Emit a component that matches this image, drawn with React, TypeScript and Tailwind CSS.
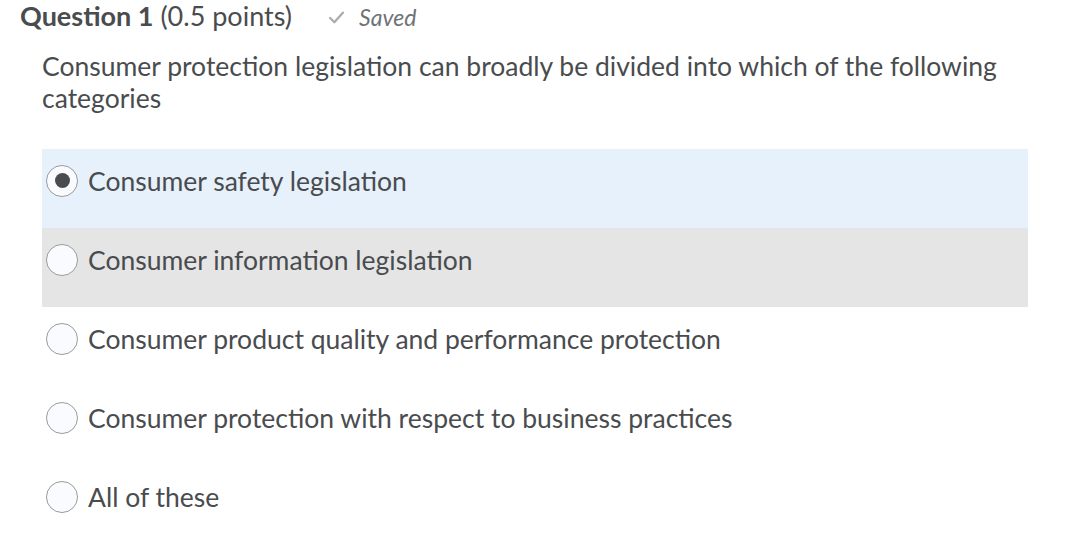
import React, { useState } from "react";

const options = [
  "Consumer safety legislation",
  "Consumer information legislation",
  "Consumer product quality and performance protection",
  "Consumer protection with respect to business practices",
  "All of these",
];

function App() {
  const [selected, setSelected] = useState(0);
  const [hovered] = useState(1);

  return (
    <div className="min-h-screen bg-white text-[#494c4e] font-['Lato','Liberation_Sans',sans-serif]">
      <div className="flex items-baseline pl-[20px]">
        <h2 className="text-[27px] leading-[32px]">
          <span className="font-bold">Question 1</span> (0.5 points)
        </h2>
        <div className="ml-[36px] flex items-baseline gap-[14px] text-[#6e7376]">
          <svg width="17" height="15" viewBox="0 0 16 14" className="self-center">
            <path d="M2 7.5 L6 11.5 L14 2.5" fill="none" stroke="#a9adb0" strokeWidth="2.2" strokeLinecap="round" strokeLinejoin="round" />
          </svg>
          <span className="text-[23px] italic">Saved</span>
        </div>
      </div>

      <div className="pl-[42px] pr-[50px]">
        <p className="mt-[15px] text-[26.5px] leading-[32px] w-[990px]">
          Consumer protection legislation can broadly be divided into which of the following categories
        </p>

        <div className="mt-[35px] w-[986px]">
          {options.map((opt, i) => (
            <label
              key={opt}
              onClick={() => setSelected(i)}
              className={
                "flex items-start h-[79px] pl-[4px] pt-[16px] cursor-pointer " +
                (i === selected ? "bg-[#e7f1fb]" : i === hovered ? "bg-[#e5e5e5]" : "")
              }
            >
              <span className="relative flex h-[32px] w-[32px] shrink-0 items-center justify-center rounded-full border border-[#97999b] bg-[#f9fbff] shadow-[inset_0_0_0_1px_#ffffff]">
                {i === selected && <span className="h-[15px] w-[15px] rounded-full bg-[#494c4e]" />}
              </span>
              <span className="ml-[10px] text-[26.5px] leading-[32px]">{opt}</span>
            </label>
          ))}
        </div>
      </div>
    </div>
  );
}

export default App;
